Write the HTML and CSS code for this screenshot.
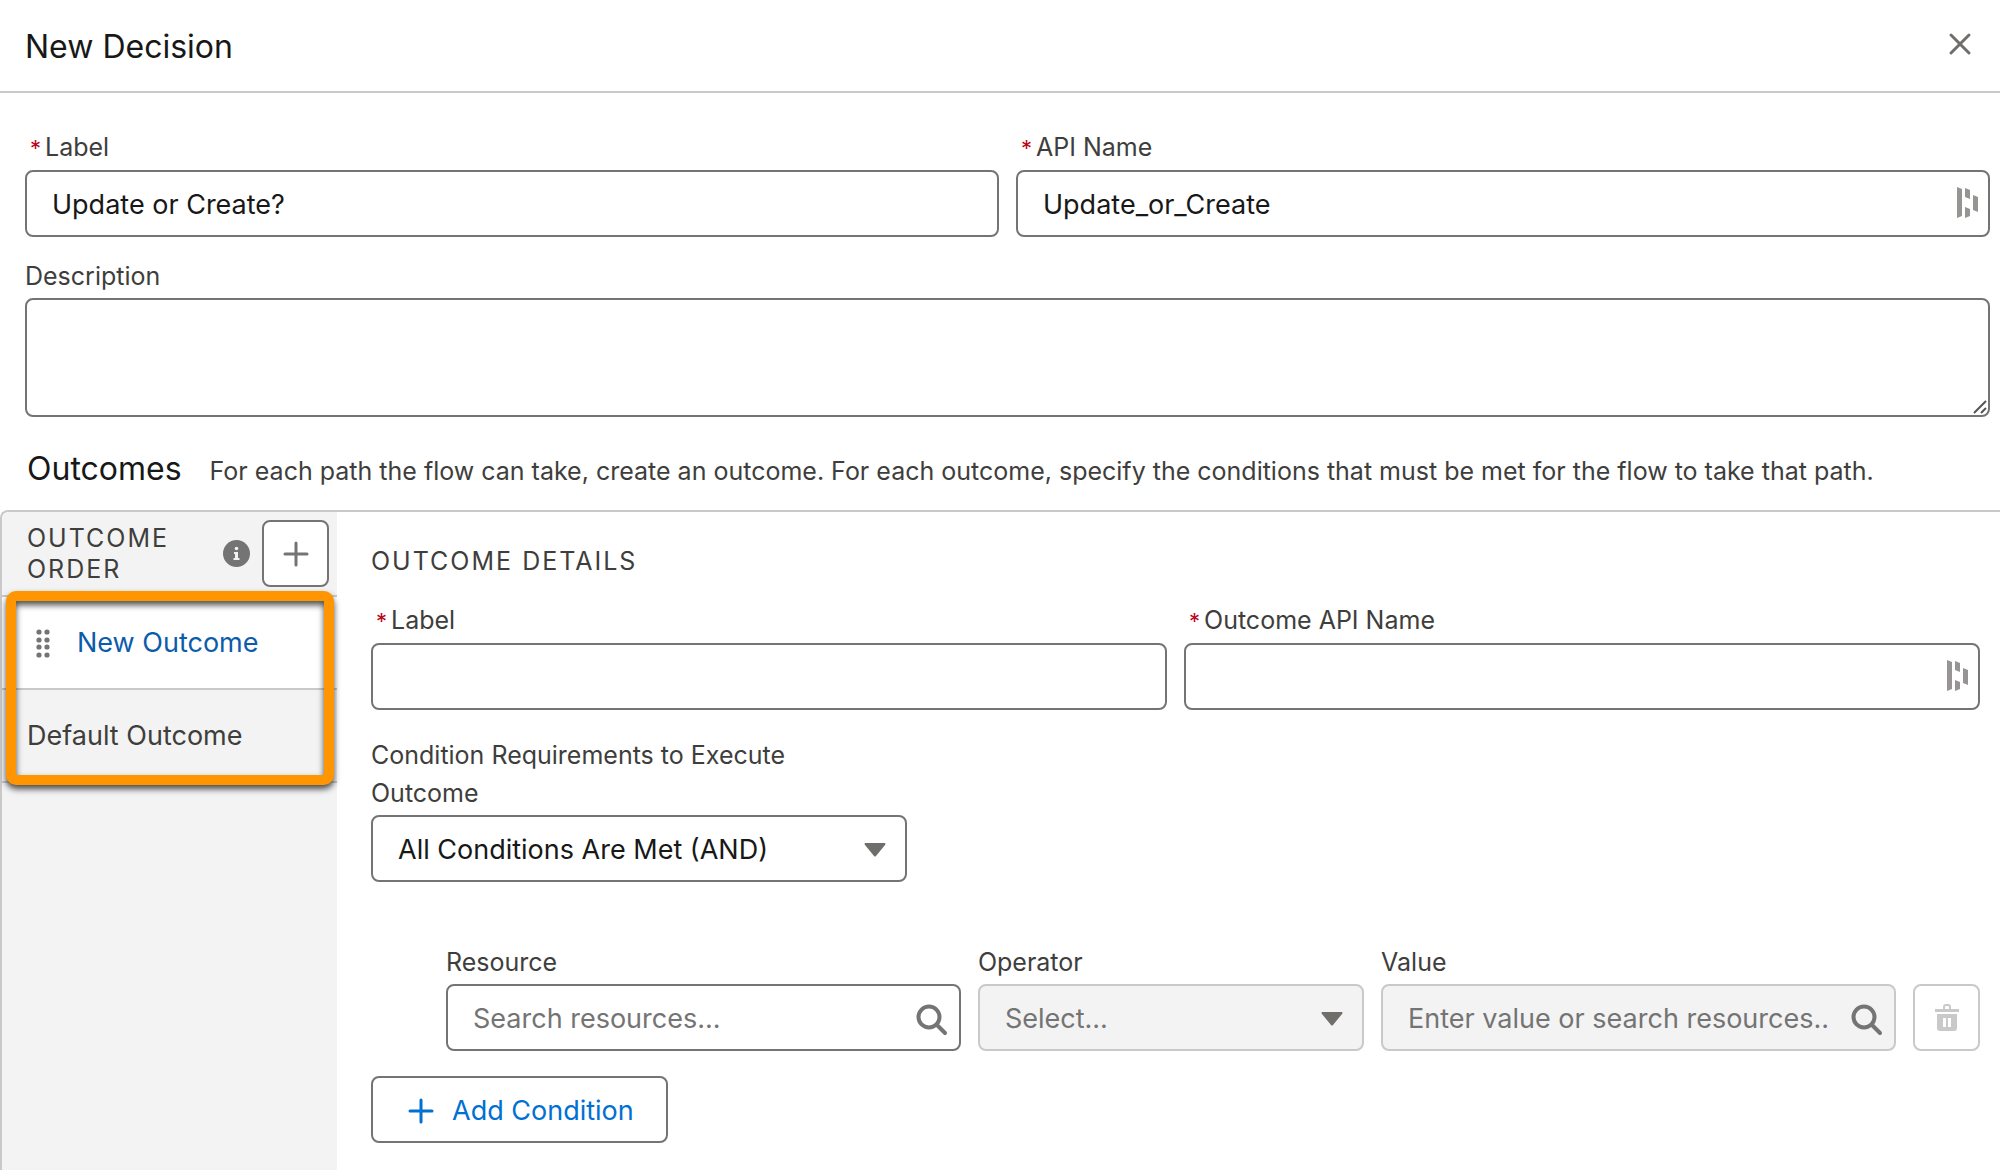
FILE: index.html
```html
<!DOCTYPE html>
<html lang="en">
<head>
  <meta charset="UTF-8">
  <title>New Decision</title>
  <link rel="stylesheet" href="styles.css">
</head>
<body>
  <header class="modal-header">
    <h1>New Decision</h1>
    <button class="close-btn" type="button" aria-label="Close">
      <svg width="24" height="24" viewBox="0 0 24 24"><path d="M3 3 21 21M21 3 3 21" fill="none" stroke="#706e6b" stroke-width="3" stroke-linecap="round"/></svg>
    </button>
  </header>

  <section class="general">
    <div class="two-col">
      <div class="field">
        <label for="label"><span class="required">*</span>Label</label>
        <div class="control"><input id="label" type="text" value="Update or Create?"></div>
      </div>
      <div class="field">
        <label for="apiName"><span class="required">*</span>API Name</label>
        <div class="control">
          <input id="apiName" type="text" value="Update_or_Create">
          <svg class="autofill" width="24" height="32" viewBox="0 0 24 32"><path d="M1 0 6 2V29L1 31ZM9 1 14 3V12L9 10ZM9 20 14 22V29L9 31ZM17 8 22 10V25L17 23Z" fill="#969594"/></svg>
        </div>
      </div>
    </div>
    <div class="field">
      <label for="description">Description</label>
      <div class="control">
        <textarea id="description"></textarea>
        <svg class="resize" width="16" height="16" viewBox="0 0 16 16"><path d="M2 14 14 2M9 14 14 9" fill="none" stroke="#555" stroke-width="2"/></svg>
      </div>
    </div>
  </section>

  <div class="outcomes-title">
    <h2>Outcomes</h2>
    <p>For each path the flow can take, create an outcome. For each outcome, specify the conditions that must be met for the flow to take that path.</p>
  </div>

  <main class="outcomes">
    <aside class="sidebar">
      <div class="sidebar-header">
        <h3>Outcome Order</h3>
        <svg class="info" width="27" height="27" viewBox="0 0 27 27"><circle cx="13.500" cy="13.500" r="13.500" fill="#747474"/><circle cx="13.500" cy="8.500" r="1.800" fill="#f3f2f2"/><path d="M11 12H15V18H16.500V20H10.500V18H12V14H11Z" fill="#f3f2f2"/></svg>
        <button class="icon-btn" type="button" aria-label="Add outcome">
          <svg width="26" height="26" viewBox="0 0 26 26"><path d="M13 2V24M2 13H24" fill="none" stroke="#747474" stroke-width="3" stroke-linecap="round"/></svg>
        </button>
      </div>
      <div class="outcome-list">
        <a class="outcome active" href="#">
          <svg width="14" height="30" viewBox="0 0 14 30"><g fill="#747474"><circle cx="3" cy="4" r="2.600"/><circle cx="11" cy="4" r="2.600"/><circle cx="3" cy="12" r="2.600"/><circle cx="11" cy="12" r="2.600"/><circle cx="3" cy="19" r="2.600"/><circle cx="11" cy="19" r="2.600"/><circle cx="3" cy="27" r="2.600"/><circle cx="11" cy="27" r="2.600"/></g></svg>
          New Outcome
        </a>
        <a class="outcome" href="#">Default Outcome</a>
        <div class="callout"></div>
      </div>
    </aside>

    <section class="details">
      <h3>Outcome Details</h3>
      <div class="two-col">
        <div class="field">
          <label for="outcomeLabel"><span class="required">*</span>Label</label>
          <div class="control"><input id="outcomeLabel" type="text"></div>
        </div>
        <div class="field">
          <label for="outcomeApi"><span class="required">*</span>Outcome API Name</label>
          <div class="control">
            <input id="outcomeApi" type="text">
            <svg class="autofill" width="24" height="32" viewBox="0 0 24 32"><path d="M1 0 6 2V29L1 31ZM9 1 14 3V12L9 10ZM9 20 14 22V29L9 31ZM17 8 22 10V25L17 23Z" fill="#969594"/></svg>
          </div>
        </div>
      </div>

      <div class="field requirement">
        <label for="logic">Condition Requirements to Execute Outcome</label>
        <div class="control">
          <select id="logic"><option>All Conditions Are Met (AND)</option></select>
          <svg class="arrow" width="22" height="14" viewBox="0 0 22 14"><path d="M1 0H21Q22 1 21 2L12 13Q11 14 10 13L1 2Q0 1 1 0Z" fill="#706e6b"/></svg>
        </div>
      </div>

      <div class="condition">
        <div class="field">
          <label for="resource">Resource</label>
          <div class="control">
            <input id="resource" type="text" placeholder="Search resources...">
            <svg class="search" width="32" height="32" viewBox="0 0 32 32"><circle cx="13" cy="13" r="10.500" fill="none" stroke="#747474" stroke-width="4"/><path d="M21 21 29 29" stroke="#747474" stroke-width="4" stroke-linecap="round"/></svg>
          </div>
        </div>
        <div class="field">
          <label for="operator">Operator</label>
          <div class="control">
            <select id="operator" disabled><option>Select...</option></select>
            <svg class="arrow" width="22" height="14" viewBox="0 0 22 14"><path d="M1 0H21Q22 1 21 2L12 13Q11 14 10 13L1 2Q0 1 1 0Z" fill="#706e6b"/></svg>
          </div>
        </div>
        <div class="field">
          <label for="value">Value</label>
          <div class="control">
            <input id="value" type="text" placeholder="Enter value or search resources.." disabled>
            <svg class="search" width="32" height="32" viewBox="0 0 32 32"><circle cx="13" cy="13" r="10.500" fill="none" stroke="#747474" stroke-width="4"/><path d="M21 21 29 29" stroke="#747474" stroke-width="4" stroke-linecap="round"/></svg>
          </div>
        </div>
        <button class="icon-btn" type="button" aria-label="Delete condition" disabled>
          <svg width="24" height="28" viewBox="0 0 24 28"><path d="M0 5H8V3Q8 0 11 0H13Q16 0 16 3V5H24V8H0ZM10 5H14V3Q14 2 13 2H11Q10 2 10 3ZM2 10H22V24Q22 27 19 27H5Q2 27 2 24ZM8 14V23H11V14ZM13 14V23H16V14Z" fill="#c9c9c9" fill-rule="evenodd"/></svg>
        </button>
      </div>

      <button class="add-btn" type="button">
        <svg width="26" height="26" viewBox="0 0 26 26"><path d="M13 2V24M2 13H24" fill="none" stroke="#0070d2" stroke-width="3" stroke-linecap="round"/></svg>
        Add Condition
      </button>
    </section>
  </main>
</body>
</html>
```
FILE: styles.css
```css
* {
  box-sizing: border-box;
}

body {
  margin: 0;
  min-height: 100vh;
  display: flex;
  flex-direction: column;
  background: #fff;
  color: #3e3e3c;
  font-family: Inter, "Liberation Sans", sans-serif;
  font-size: 25px;
}

h1, h2, h3, p {
  margin: 0;
  font-weight: 400;
}

h1, h2 {
  color: #181818;
  font-size: 32px;
  line-height: 40px;
}

button, input, select, textarea {
  font: inherit;
  color: inherit;
}

svg {
  display: block;
  flex: none;
}

.modal-header {
  display: flex;
  justify-content: space-between;
  align-items: center;
  height: 93px;
  padding: 2px 28px 0 25px;
  border-bottom: 2px solid #c9c9c9;
}

.close-btn {
  padding: 0 0 6px;
  border: 0;
  background: none;
}

.general {
  padding: 35px 10px 0 25px;
}

.two-col {
  display: grid;
  grid-template-columns: 1fr 1fr;
  gap: 17px;
}

.field label {
  display: block;
  padding-bottom: 3px;
  line-height: 38px;
}

.required {
  margin: 0 4px 0 5px;
  color: #ba0517;
  font-size: 22px;
}

.control {
  position: relative;
}

input, select, textarea {
  display: block;
  width: 100%;
  height: 67px;
  padding: 2px 25px 0;
  border: 2px solid #747474;
  border-radius: 8px;
  background: #fff;
  color: #181818;
  font-size: 27px;
}

select {
  appearance: none;
}

textarea {
  height: 119px;
  resize: none;
}

::placeholder {
  color: #747474;
  opacity: 1;
}

input:disabled, select:disabled {
  border-color: #c9c9c9;
  background: #f3f3f3;
  color: #747474;
  opacity: 1;
}

.autofill, .resize, .arrow, .search {
  position: absolute;
  pointer-events: none;
}

.autofill {
  top: 17px;
  right: 10px;
}

.resize {
  right: 2px;
  bottom: 2px;
}

.arrow {
  top: 28px;
  right: 21px;
}

.search {
  top: 20px;
  right: 13px;
}

.general .two-col + .field {
  margin-top: 20px;
}

.outcomes-title {
  display: flex;
  align-items: baseline;
  gap: 28px;
  padding: 32px 27px 21px;
}

.outcomes {
  display: flex;
  flex: 1;
  border-top: 2px solid #c9c9c9;
  border-left: 2px solid #c9c9c9;
  border-top-left-radius: 8px;
}

h3 {
  font-size: 25px;
  line-height: 31px;
  letter-spacing: 2px;
  text-transform: uppercase;
}

.sidebar {
  flex: none;
  width: 335px;
  border-top-left-radius: 8px;
  background: #f3f3f3;
}

.sidebar-header {
  display: flex;
  align-items: center;
  gap: 12px;
  padding: 8px 8px 8px 25px;
}

.sidebar-header h3 {
  flex: 1;
}

.icon-btn {
  display: flex;
  flex: none;
  justify-content: center;
  align-items: center;
  width: 67px;
  height: 67px;
  padding: 0;
  border: 2px solid #747474;
  border-radius: 8px;
  background: #fff;
}

.icon-btn:disabled {
  border-color: #c9c9c9;
}

.outcome-list {
  position: relative;
  border-top: 2px solid #c9c9c9;
}

.outcome {
  display: flex;
  align-items: center;
  gap: 27px;
  height: 93px;
  padding-left: 25px;
  border-bottom: 2px solid #c9c9c9;
  color: #3e3e3c;
  font-size: 27px;
  text-decoration: none;
}

.outcome.active {
  padding-left: 34px;
  background: #fff;
  color: #0b5cab;
}

/* orange frame over the outcome list */
.callout {
  position: absolute;
  inset: -6px 3px -2px 4px;
  border: 10px solid #ff9500;
  border-radius: 10px;
  filter: drop-shadow(0 4px 3px rgba(0, 0, 0, 0.7));
  pointer-events: none;
}

.details {
  flex: 1;
  padding: 34px 20px 26px 34px;
}

.details h3 {
  margin-bottom: 24px;
}

.requirement {
  width: 536px;
  margin-top: 26px;
}

.requirement label {
  width: 460px;
}

.condition {
  display: grid;
  grid-template-columns: 4fr 3fr 4fr 67px;
  align-items: end;
  gap: 17px;
  margin: 61px 0 25px;
  padding-left: 75px;
}

.add-btn {
  display: flex;
  align-items: center;
  gap: 18px;
  height: 67px;
  padding: 2px 32px 0 35px;
  border: 2px solid #747474;
  border-radius: 8px;
  background: #fff;
  color: #0070d2;
  font-size: 27px;
}
```
